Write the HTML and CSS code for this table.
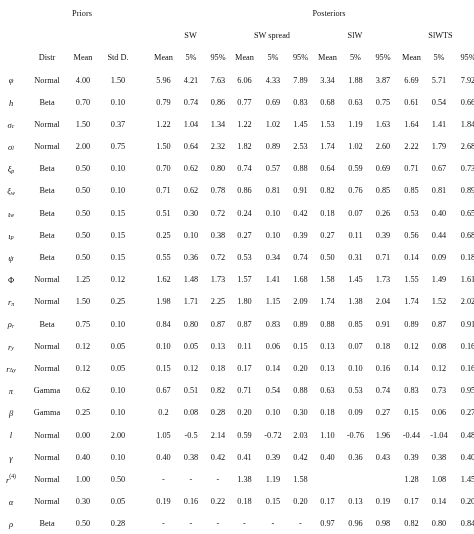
FILE: index.html
```html
<!DOCTYPE html>
<html>
<head>
<meta charset="utf-8">
<link rel="stylesheet" href="styles.css">
</head>
<body>
<div class="tbl">
  <div class="c sym"></div>
  <div class="c span-priors">Priors</div>
  <div class="c span-post">Posteriors</div>

  <div class="c g1">SW</div>
  <div class="c g2">SW spread</div>
  <div class="c g3">SlW</div>
  <div class="c g4">SlWTS</div>

  <div class="c sym"></div><div class="c">Distr</div><div class="c">Mean</div><div class="c">Std D.</div><div class="c gap"></div>
  <div class="c">Mean</div><div class="c">5%</div><div class="c">95%</div>
  <div class="c">Mean</div><div class="c">5%</div><div class="c">95%</div>
  <div class="c">Mean</div><div class="c">5%</div><div class="c">95%</div>
  <div class="c">Mean</div><div class="c">5%</div><div class="c">95%</div>

  <div class="c sym"><i>φ</i></div><div class="c">Normal</div><div class="c">4.00</div><div class="c">1.50</div><div class="c gap"></div>
  <div class="c">5.96</div><div class="c">4.21</div><div class="c">7.63</div><div class="c">6.06</div><div class="c">4.33</div><div class="c">7.89</div><div class="c">3.34</div><div class="c">1.88</div><div class="c">3.87</div><div class="c">6.69</div><div class="c">5.71</div><div class="c">7.92</div>

  <div class="c sym"><i>h</i></div><div class="c">Beta</div><div class="c">0.70</div><div class="c">0.10</div><div class="c gap"></div>
  <div class="c">0.79</div><div class="c">0.74</div><div class="c">0.86</div><div class="c">0.77</div><div class="c">0.69</div><div class="c">0.83</div><div class="c">0.68</div><div class="c">0.63</div><div class="c">0.75</div><div class="c">0.61</div><div class="c">0.54</div><div class="c">0.66</div>

  <div class="c sym"><i>σ</i><sub><i>c</i></sub></div><div class="c">Normal</div><div class="c">1.50</div><div class="c">0.37</div><div class="c gap"></div>
  <div class="c">1.22</div><div class="c">1.04</div><div class="c">1.34</div><div class="c">1.22</div><div class="c">1.02</div><div class="c">1.45</div><div class="c">1.53</div><div class="c">1.19</div><div class="c">1.63</div><div class="c">1.64</div><div class="c">1.41</div><div class="c">1.84</div>

  <div class="c sym"><i>σ</i><sub><i>l</i></sub></div><div class="c">Normal</div><div class="c">2.00</div><div class="c">0.75</div><div class="c gap"></div>
  <div class="c">1.50</div><div class="c">0.64</div><div class="c">2.32</div><div class="c">1.82</div><div class="c">0.89</div><div class="c">2.53</div><div class="c">1.74</div><div class="c">1.02</div><div class="c">2.60</div><div class="c">2.22</div><div class="c">1.79</div><div class="c">2.68</div>

  <div class="c sym"><i>ξ</i><sub><i>p</i></sub></div><div class="c">Beta</div><div class="c">0.50</div><div class="c">0.10</div><div class="c gap"></div>
  <div class="c">0.70</div><div class="c">0.62</div><div class="c">0.80</div><div class="c">0.74</div><div class="c">0.57</div><div class="c">0.88</div><div class="c">0.64</div><div class="c">0.59</div><div class="c">0.69</div><div class="c">0.71</div><div class="c">0.67</div><div class="c">0.73</div>

  <div class="c sym"><i>ξ</i><sub><i>w</i></sub></div><div class="c">Beta</div><div class="c">0.50</div><div class="c">0.10</div><div class="c gap"></div>
  <div class="c">0.71</div><div class="c">0.62</div><div class="c">0.78</div><div class="c">0.86</div><div class="c">0.81</div><div class="c">0.91</div><div class="c">0.82</div><div class="c">0.76</div><div class="c">0.85</div><div class="c">0.85</div><div class="c">0.81</div><div class="c">0.89</div>

  <div class="c sym"><i>ι</i><sub><i>w</i></sub></div><div class="c">Beta</div><div class="c">0.50</div><div class="c">0.15</div><div class="c gap"></div>
  <div class="c">0.51</div><div class="c">0.30</div><div class="c">0.72</div><div class="c">0.24</div><div class="c">0.10</div><div class="c">0.42</div><div class="c">0.18</div><div class="c">0.07</div><div class="c">0.26</div><div class="c">0.53</div><div class="c">0.40</div><div class="c">0.65</div>

  <div class="c sym"><i>ι</i><sub><i>p</i></sub></div><div class="c">Beta</div><div class="c">0.50</div><div class="c">0.15</div><div class="c gap"></div>
  <div class="c">0.25</div><div class="c">0.10</div><div class="c">0.38</div><div class="c">0.27</div><div class="c">0.10</div><div class="c">0.39</div><div class="c">0.27</div><div class="c">0.11</div><div class="c">0.39</div><div class="c">0.56</div><div class="c">0.44</div><div class="c">0.68</div>

  <div class="c sym"><i>ψ</i></div><div class="c">Beta</div><div class="c">0.50</div><div class="c">0.15</div><div class="c gap"></div>
  <div class="c">0.55</div><div class="c">0.36</div><div class="c">0.72</div><div class="c">0.53</div><div class="c">0.34</div><div class="c">0.74</div><div class="c">0.50</div><div class="c">0.31</div><div class="c">0.71</div><div class="c">0.14</div><div class="c">0.09</div><div class="c">0.18</div>

  <div class="c sym">Φ</div><div class="c">Normal</div><div class="c">1.25</div><div class="c">0.12</div><div class="c gap"></div>
  <div class="c">1.62</div><div class="c">1.48</div><div class="c">1.73</div><div class="c">1.57</div><div class="c">1.41</div><div class="c">1.68</div><div class="c">1.58</div><div class="c">1.45</div><div class="c">1.73</div><div class="c">1.55</div><div class="c">1.49</div><div class="c">1.61</div>

  <div class="c sym"><i>r</i><sub><i>π</i></sub></div><div class="c">Normal</div><div class="c">1.50</div><div class="c">0.25</div><div class="c gap"></div>
  <div class="c">1.98</div><div class="c">1.71</div><div class="c">2.25</div><div class="c">1.80</div><div class="c">1.15</div><div class="c">2.09</div><div class="c">1.74</div><div class="c">1.38</div><div class="c">2.04</div><div class="c">1.74</div><div class="c">1.52</div><div class="c">2.02</div>

  <div class="c sym"><i>ρ</i><sub><i>r</i></sub></div><div class="c">Beta</div><div class="c">0.75</div><div class="c">0.10</div><div class="c gap"></div>
  <div class="c">0.84</div><div class="c">0.80</div><div class="c">0.87</div><div class="c">0.87</div><div class="c">0.83</div><div class="c">0.89</div><div class="c">0.88</div><div class="c">0.85</div><div class="c">0.91</div><div class="c">0.89</div><div class="c">0.87</div><div class="c">0.91</div>

  <div class="c sym"><i>r</i><sub><i>y</i></sub></div><div class="c">Normal</div><div class="c">0.12</div><div class="c">0.05</div><div class="c gap"></div>
  <div class="c">0.10</div><div class="c">0.05</div><div class="c">0.13</div><div class="c">0.11</div><div class="c">0.06</div><div class="c">0.15</div><div class="c">0.13</div><div class="c">0.07</div><div class="c">0.18</div><div class="c">0.12</div><div class="c">0.08</div><div class="c">0.16</div>

  <div class="c sym"><i>r</i><sub>Δ<i>y</i></sub></div><div class="c">Normal</div><div class="c">0.12</div><div class="c">0.05</div><div class="c gap"></div>
  <div class="c">0.15</div><div class="c">0.12</div><div class="c">0.18</div><div class="c">0.17</div><div class="c">0.14</div><div class="c">0.20</div><div class="c">0.13</div><div class="c">0.10</div><div class="c">0.16</div><div class="c">0.14</div><div class="c">0.12</div><div class="c">0.16</div>

  <div class="c sym"><i>π</i></div><div class="c">Gamma</div><div class="c">0.62</div><div class="c">0.10</div><div class="c gap"></div>
  <div class="c">0.67</div><div class="c">0.51</div><div class="c">0.82</div><div class="c">0.71</div><div class="c">0.54</div><div class="c">0.88</div><div class="c">0.63</div><div class="c">0.53</div><div class="c">0.74</div><div class="c">0.83</div><div class="c">0.73</div><div class="c">0.95</div>

  <div class="c sym"><i>β</i></div><div class="c">Gamma</div><div class="c">0.25</div><div class="c">0.10</div><div class="c gap"></div>
  <div class="c">0.2</div><div class="c">0.08</div><div class="c">0.28</div><div class="c">0.20</div><div class="c">0.10</div><div class="c">0.30</div><div class="c">0.18</div><div class="c">0.09</div><div class="c">0.27</div><div class="c">0.15</div><div class="c">0.06</div><div class="c">0.27</div>

  <div class="c sym"><i>l</i></div><div class="c">Normal</div><div class="c">0.00</div><div class="c">2.00</div><div class="c gap"></div>
  <div class="c">1.05</div><div class="c">-0.5</div><div class="c">2.14</div><div class="c">0.59</div><div class="c">-0.72</div><div class="c">2.03</div><div class="c">1.10</div><div class="c">-0.76</div><div class="c">1.96</div><div class="c">-0.44</div><div class="c">-1.04</div><div class="c">0.48</div>

  <div class="c sym"><i>γ</i></div><div class="c">Normal</div><div class="c">0.40</div><div class="c">0.10</div><div class="c gap"></div>
  <div class="c">0.40</div><div class="c">0.38</div><div class="c">0.42</div><div class="c">0.41</div><div class="c">0.39</div><div class="c">0.42</div><div class="c">0.40</div><div class="c">0.36</div><div class="c">0.43</div><div class="c">0.39</div><div class="c">0.38</div><div class="c">0.40</div>

  <div class="c sym"><i>r</i><sup>(4)</sup></div><div class="c">Normal</div><div class="c">1.00</div><div class="c">0.50</div><div class="c gap"></div>
  <div class="c">-</div><div class="c">-</div><div class="c">-</div><div class="c">1.38</div><div class="c">1.19</div><div class="c">1.58</div><div class="c"></div><div class="c"></div><div class="c"></div><div class="c">1.28</div><div class="c">1.08</div><div class="c">1.45</div>

  <div class="c sym"><i>α</i></div><div class="c">Normal</div><div class="c">0.30</div><div class="c">0.05</div><div class="c gap"></div>
  <div class="c">0.19</div><div class="c">0.16</div><div class="c">0.22</div><div class="c">0.18</div><div class="c">0.15</div><div class="c">0.20</div><div class="c">0.17</div><div class="c">0.13</div><div class="c">0.19</div><div class="c">0.17</div><div class="c">0.14</div><div class="c">0.20</div>

  <div class="c sym"><i>ρ</i></div><div class="c">Beta</div><div class="c">0.50</div><div class="c">0.28</div><div class="c gap"></div>
  <div class="c">-</div><div class="c">-</div><div class="c">-</div><div class="c">-</div><div class="c">-</div><div class="c">-</div><div class="c">0.97</div><div class="c">0.96</div><div class="c">0.98</div><div class="c">0.82</div><div class="c">0.80</div><div class="c">0.84</div>
</div>
</body>
</html>
```

FILE: styles.css
```css
html, body {
  margin: 0;
  padding: 0;
  background: #ffffff;
  overflow: hidden;
}

body {
  width: 474px;
  height: 534px;
  font-family: "Liberation Serif", "Times New Roman", serif;
  font-size: 8.3px;
  color: #111111;
}

.tbl {
  display: grid;
  grid-template-columns: 22px 50px 22px 48px 8px 27px 28px 26px 27px 30px 25px 29px 27px 28px 29px 26px 32px;
  grid-auto-rows: 22.2px;
  padding-top: 3px;
  width: 484px;
  background: #ffffff;
  will-change: transform;
}

.c {
  display: flex;
  justify-content: center;
  align-items: center;
  white-space: nowrap;
  line-height: 1;
}

.sym {
  grid-column: 1;
  font-size: 8.5px;
}

.sym sub {
  font-size: 5.8px;
  position: relative;
  top: 2px;
  vertical-align: baseline;
}

.sym sup {
  font-size: 5.8px;
  position: relative;
  top: -3px;
  vertical-align: baseline;
}

.span-priors {
  grid-column: 2 / 5;
}

.span-post {
  grid-column: 6 / 18;
  padding-left: 24px;
}

.g1 {
  grid-column: 6 / 9;
}

.g2 {
  grid-column: 9 / 12;
}

.g3 {
  grid-column: 12 / 15;
}

.g4 {
  grid-column: 15 / 18;
}
```
